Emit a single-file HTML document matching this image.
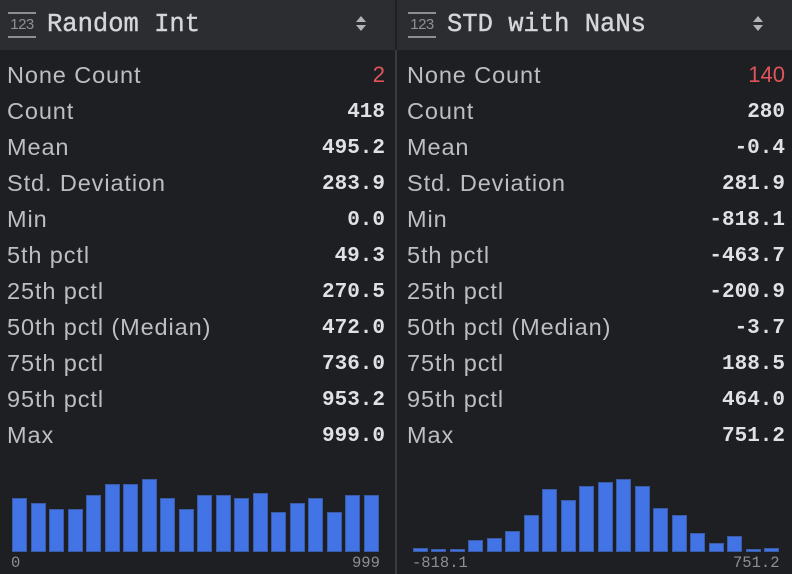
<!DOCTYPE html>
<html><head><style>
body{margin:0;width:792px;height:574px;background:#1e1f22;overflow:hidden;position:relative;font-family:"Liberation Sans",sans-serif}
.col{position:absolute;top:0;width:396px;height:574px}
.hdr{position:absolute;left:0;top:0;width:395px;height:50px;background:#2b2d30}
.ic{position:absolute;left:8px;top:12px;width:28px;height:22px;border-top:2px solid #8c8f94;border-bottom:2px solid #8c8f94;color:#8c8f94;font:15px "Liberation Sans",sans-serif;line-height:22px;text-align:center;letter-spacing:-0.5px}
.ttl{position:absolute;left:47px;top:10px;font:25.5px "Liberation Mono",monospace;color:#d4d6da;-webkit-text-stroke:0.4px #d4d6da}
.sort{position:absolute;left:356px;top:16px;width:0;height:0}
.sort:before{content:"";position:absolute;left:0;top:0;border-left:5px solid transparent;border-right:5px solid transparent;border-bottom:6px solid #b0b3b8}
.sort:after{content:"";position:absolute;left:0;top:9px;border-left:5px solid transparent;border-right:5px solid transparent;border-top:6px solid #b0b3b8}
.rows{position:absolute;left:7px;top:58px;width:378px}
.r{height:36px;display:flex;justify-content:space-between;align-items:center}
.l{font-size:23.5px;color:#bcbec4;letter-spacing:0.9px;position:relative;top:-1px}
.v{font:bold 21px "Liberation Mono",monospace;color:#dfe1e5}
.red{color:#e0545a;font-weight:normal;font-family:"Liberation Sans",sans-serif;font-size:22px;position:relative;top:-1px}
.b{position:absolute;bottom:22px;width:15px;background:#4374e6;border:1px solid #3a5ba8;box-sizing:border-box}
.ax{position:absolute;top:554px;font:15.5px "Liberation Mono",monospace;color:#8c8f94}
</style></head><body>
<div style="position:absolute;left:395px;top:50px;width:2px;height:524px;background:#393b40"></div>
<div style="position:absolute;left:395px;top:0;width:2px;height:50px;background:#1e1f22"></div>

<div class="col" style="left:0">
<div class="hdr"><div class="ic">123</div><div class="ttl">Random Int</div><div class="sort"></div></div>
<div class="rows">
<div class="r"><span class="l">None Count</span><span class="red">2</span></div>
<div class="r"><span class="l">Count</span><span class="v">418</span></div>
<div class="r"><span class="l">Mean</span><span class="v">495.2</span></div>
<div class="r"><span class="l">Std. Deviation</span><span class="v">283.9</span></div>
<div class="r"><span class="l">Min</span><span class="v">0.0</span></div>
<div class="r"><span class="l">5th pctl</span><span class="v">49.3</span></div>
<div class="r"><span class="l">25th pctl</span><span class="v">270.5</span></div>
<div class="r"><span class="l">50th pctl (Median)</span><span class="v">472.0</span></div>
<div class="r"><span class="l">75th pctl</span><span class="v">736.0</span></div>
<div class="r"><span class="l">95th pctl</span><span class="v">953.2</span></div>
<div class="r"><span class="l">Max</span><span class="v">999.0</span></div>
</div>
<div class="b" style="left:12px;height:54px"></div>
<div class="b" style="left:31px;height:49px"></div>
<div class="b" style="left:49px;height:43px"></div>
<div class="b" style="left:68px;height:43px"></div>
<div class="b" style="left:86px;height:57px"></div>
<div class="b" style="left:105px;height:68px"></div>
<div class="b" style="left:123px;height:68px"></div>
<div class="b" style="left:142px;height:73px"></div>
<div class="b" style="left:160px;height:54px"></div>
<div class="b" style="left:179px;height:43px"></div>
<div class="b" style="left:197px;height:57px"></div>
<div class="b" style="left:216px;height:57px"></div>
<div class="b" style="left:234px;height:54px"></div>
<div class="b" style="left:253px;height:59px"></div>
<div class="b" style="left:271px;height:40px"></div>
<div class="b" style="left:290px;height:49px"></div>
<div class="b" style="left:308px;height:54px"></div>
<div class="b" style="left:327px;height:40px"></div>
<div class="b" style="left:345px;height:57px"></div>
<div class="b" style="left:364px;height:57px"></div>
<div class="ax" style="left:11px">0</div>
<div class="ax" style="left:352px">999</div>
</div>

<div class="col" style="left:400px">
<div class="hdr" style="left:-3px;width:395px"><div class="ic" style="left:11px">123</div><div class="ttl" style="left:50px">STD with NaNs</div><div class="sort" style="left:356px"></div></div>
<div class="rows">
<div class="r"><span class="l">None Count</span><span class="red">140</span></div>
<div class="r"><span class="l">Count</span><span class="v">280</span></div>
<div class="r"><span class="l">Mean</span><span class="v">-0.4</span></div>
<div class="r"><span class="l">Std. Deviation</span><span class="v">281.9</span></div>
<div class="r"><span class="l">Min</span><span class="v">-818.1</span></div>
<div class="r"><span class="l">5th pctl</span><span class="v">-463.7</span></div>
<div class="r"><span class="l">25th pctl</span><span class="v">-200.9</span></div>
<div class="r"><span class="l">50th pctl (Median)</span><span class="v">-3.7</span></div>
<div class="r"><span class="l">75th pctl</span><span class="v">188.5</span></div>
<div class="r"><span class="l">95th pctl</span><span class="v">464.0</span></div>
<div class="r"><span class="l">Max</span><span class="v">751.2</span></div>
</div>
<div class="b" style="left:13px;height:4px"></div>
<div class="b" style="left:31px;height:3px"></div>
<div class="b" style="left:50px;height:3px"></div>
<div class="b" style="left:68px;height:12px"></div>
<div class="b" style="left:87px;height:14px"></div>
<div class="b" style="left:105px;height:21px"></div>
<div class="b" style="left:124px;height:37px"></div>
<div class="b" style="left:142px;height:63px"></div>
<div class="b" style="left:161px;height:52px"></div>
<div class="b" style="left:179px;height:66px"></div>
<div class="b" style="left:198px;height:70px"></div>
<div class="b" style="left:216px;height:73px"></div>
<div class="b" style="left:235px;height:66px"></div>
<div class="b" style="left:253px;height:44px"></div>
<div class="b" style="left:272px;height:37px"></div>
<div class="b" style="left:290px;height:19px"></div>
<div class="b" style="left:309px;height:9px"></div>
<div class="b" style="left:327px;height:16px"></div>
<div class="b" style="left:346px;height:3px"></div>
<div class="b" style="left:364px;height:4px"></div>
<div class="ax" style="left:12px">-818.1</div>
<div class="ax" style="left:333px">751.2</div>
</div>
</body></html>
